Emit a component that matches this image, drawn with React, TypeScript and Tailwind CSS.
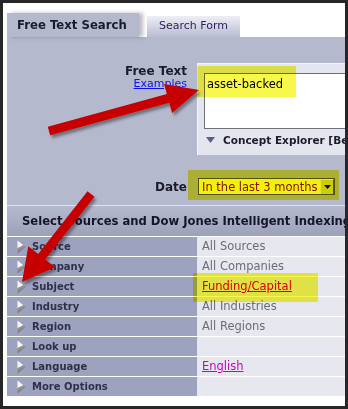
const rows = [
  { label: 'Source', value: 'All Sources', kind: 'plain' },
  { label: 'Company', value: 'All Companies', kind: 'plain' },
  { label: 'Subject', value: 'Funding/Capital', kind: 'red' },
  { label: 'Industry', value: 'All Industries', kind: 'plain' },
  { label: 'Region', value: 'All Regions', kind: 'plain' },
  { label: 'Look up', value: '', kind: 'plain' },
  { label: 'Language', value: 'English', kind: 'pink' },
  { label: 'More Options', value: '', kind: 'plain' },
]

function RowArrow() {
  return (
    <svg width="9" height="14" viewBox="0 0 9 14" className="shrink-0">
      <defs>
        <linearGradient id="tri" x1="0" y1="0" x2="0.3" y2="1">
          <stop offset="0" stopColor="#ffffff" />
          <stop offset="0.5" stopColor="#f2f2f2" />
          <stop offset="0.55" stopColor="#9a9a9a" />
          <stop offset="1" stopColor="#6e6e6e" />
        </linearGradient>
      </defs>
      <polygon points="0.5,0.5 8.5,7 0.5,13.5" fill="url(#tri)" />
    </svg>
  )
}

export default function App() {
  return (
    <div className="relative w-[348px] h-[409px] bg-[#262626] p-[3px] font-['DejaVu_Sans',sans-serif] overflow-hidden">
      <div className="relative h-full bg-white pl-[4px] pt-[10px]">
        {/* Tabs */}
        <div className="flex items-end h-[24px]">
          <div className="relative z-10 w-[132px] h-[24px] bg-[#b5b9cd] pl-[10px] pt-[5px] text-[11.7px] leading-[14px] font-bold text-[#1b1b2b] shadow-[4px_0_4px_rgba(60,60,80,0.35)]">
            Free Text Search
          </div>
          <div className="ml-[8px] w-[93px] h-[21px] bg-gradient-to-b from-[#eeeff5] to-[#b8bcd0] text-[11px] text-[#2b1e5c] flex items-center justify-center">
            Search Form
          </div>
        </div>

        {/* Panel */}
        <div className="w-[338px] bg-[#b5b9cd]">
          <div className="grid grid-cols-[190px_1fr] pt-[26px]">
            <div className="flex flex-col items-end pr-[10px] pt-[1px]">
              <span className="text-[12px] leading-[14px] font-bold text-[#1b1b2b]">Free Text</span>
              <span className="text-[11px] leading-[12px] text-[#1010ee] underline">Examples</span>
            </div>
            <div className="h-[92px] bg-[#e3e5ef] border-l border-t border-[#f4f5fa] pl-[6px] pt-[9px] overflow-hidden">
              <div className="h-[56px] bg-white border border-[#6f6f78] border-r-0 pl-[2px] pt-[3px] text-[11.5px] leading-[14px] text-black">
                asset-backed
              </div>
              <div className="flex items-center gap-[8px] pl-[2px] pt-[4px]">
                <svg width="9" height="6" viewBox="0 0 9 6" className="shrink-0">
                  <polygon points="0,0 9,0 4.5,6" fill="#5c6184" />
                </svg>
                <span className="text-[10.5px] leading-[14px] font-bold text-[#1b1b2b] whitespace-nowrap">
                  Concept Explorer [Beta]
                </span>
              </div>
            </div>

            <div className="flex justify-end items-center pr-[10px] pt-[23px] h-[40px]">
              <span className="text-[12px] leading-[14px] font-bold text-[#1b1b2b]">Date</span>
            </div>
            <div className="pt-[23px] pl-[1px]">
              <div className="flex items-center w-[137px] h-[17px] bg-[#ffff1e] border border-[#55552a]">
                <span className="flex-1 pl-[3px] text-[11.5px] leading-[14px] text-[#8a0f0f] whitespace-nowrap">
                  In the last 3 months
                </span>
                <div className="w-[14px] h-[15px] bg-[#d8d830] border-l border-t border-[#f6f6a0] border-r border-r-[#5a5a20] flex items-center justify-center">
                  <svg width="7" height="4" viewBox="0 0 7 4">
                    <polygon points="0,0 7,0 3.5,4" fill="#111" />
                  </svg>
                </div>
              </div>
            </div>
          </div>

          <div className="h-[10px]" />
          <div className="h-[1px] bg-[#dfe1ea]" />
          <div className="h-[30px] bg-gradient-to-b from-[#b6bacf] to-[#9ca1ba] flex items-center pl-[15px] pt-[2px] text-[11.6px] font-bold text-[#14142a] whitespace-nowrap overflow-hidden">
            Select Sources and Dow Jones Intelligent Indexing
          </div>
        </div>

        {/* Rows */}
        <div className="w-[338px]">
          {rows.map((r) => (
            <div key={r.label} className="grid grid-cols-[190px_1fr] border-t border-white h-[20px]">
              <div className="bg-[#9da2bf] flex items-center pl-[10px] gap-[6px]">
                <RowArrow />
                <span className="text-[10px] font-bold text-[#30304a] whitespace-nowrap">{r.label}</span>
              </div>
              <div className="bg-[#e7e8ef] flex items-center pl-[5px] text-[11.5px] whitespace-nowrap">
                {r.kind === 'plain' && <span className="text-[#6c6c74]">{r.value}</span>}
                {r.kind === 'red' && <span className="text-[#e00000] underline">{r.value}</span>}
                {r.kind === 'pink' && <span className="text-[#c800c0] underline">{r.value}</span>}
              </div>
            </div>
          ))}
        </div>

        {/* Highlights */}
        <div className="absolute left-[194px] top-[63px] w-[99px] h-[31px] bg-[#f8f84c] mix-blend-multiply" />
        <div className="absolute left-[185px] top-[167px] w-[151px] h-[30px] bg-[#f2f240] mix-blend-multiply" />
        <div className="absolute left-[190px] top-[270px] w-[125px] h-[29px] bg-[#f8f84c] mix-blend-multiply" />
      </div>

      {/* Red arrows */}
      <svg className="absolute inset-0 pointer-events-none" width="348" height="409" viewBox="0 0 348 409">
        <defs>
          <filter id="sh" x="-20%" y="-20%" width="140%" height="140%">
            <feDropShadow dx="2" dy="3" stdDeviation="1.8" floodColor="#000" floodOpacity="0.4" />
          </filter>
        </defs>
        <polygon
          filter="url(#sh)"
          fill="#c60000"
          points="47.8,126.7 166.9,94.1 164.1,83.9 199,90 172.1,112.9 169.3,102.7 50.2,135.3"
        />
        <polygon
          filter="url(#sh)"
          fill="#c60000"
          points="87.5,191.2 38.2,254 28.3,246.3 22,282 55.1,267.3 45.2,259.6 94.5,196.8"
        />
      </svg>
    </div>
  )
}
